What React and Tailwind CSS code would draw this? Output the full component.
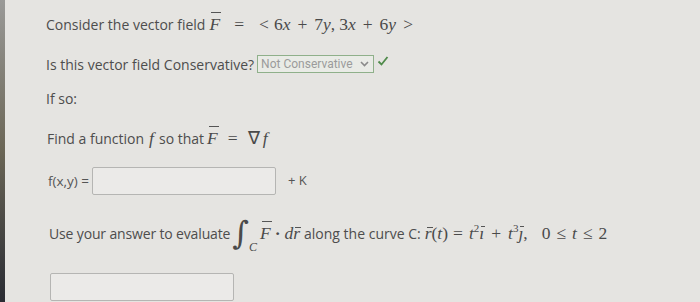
import React from "react";

const M = ({ children, className = "" }) => (
  <span className={"font-['Liberation_Serif',serif] italic text-[#4a4a4a] " + className}>{children}</span>
);

const Up = ({ children, className = "" }) => (
  <span className={"font-['Liberation_Serif',serif] not-italic text-[#4a4a4a] " + className}>{children}</span>
);

// letter with a bar over it (vector notation)
const Bar = ({ children, top = "top-[2px]", className = "" }) => (
  <span className={"relative inline-block font-['Liberation_Serif',serif] italic text-[#4a4a4a] " + className}>
    <span className={"absolute left-[2px] right-[-1px] h-[1px] bg-[#555] " + top}></span>
    {children}
  </span>
);

export default function App() {
  return (
    <div className="w-[700px] h-[302px] overflow-hidden flex bg-[#e5e4e1] font-['Open_Sans',sans-serif] text-[#4d4d4d]">
      {/* dark strip at the left edge of the photo */}
      <div className="w-[5px] h-full bg-gradient-to-b from-[#9a9a98] via-[#6b6656] to-[#2a2c33]"></div>

      <div className="flex-1 flex flex-col pl-[41px] pt-[12px] text-[14px]">
        <div className="flex items-center h-[22px] mt-[1px]">
          <span>Consider the vector field</span>
          <span className="ml-[4px] text-[17.5px] flex items-center">
            <Bar top="top-[1px]">F</Bar>
            <Up className="ml-[14px]">=</Up>
            <Up className="ml-[15px]">&lt;</Up>
            <Up className="ml-[5px]">6</Up><M>x</M>
            <Up className="ml-[7px]">+</Up>
            <Up className="ml-[7px]">7</Up><M>y</M><Up>,</Up>
            <Up className="ml-[4px]">3</Up><M>x</M>
            <Up className="ml-[7px]">+</Up>
            <Up className="ml-[7px]">6</Up><M>y</M>
            <Up className="ml-[7px]">&gt;</Up>
          </span>
        </div>

        <div className="flex items-center h-[22px] mt-[18px]">
          <span>Is this vector field Conservative?</span>
          <div className="ml-[3px] w-[117px] h-[18px] border border-[#8fb08a] bg-[#e9ebe6] flex items-center pl-[3px] pr-[4px] font-['Roboto',sans-serif] text-[12px] text-[#9b9b9b]">
            <span className="flex-1">Not Conservative</span>
            <svg width="9" height="6" viewBox="0 0 9 6" className="ml-[2px]">
              <path d="M1 1 L4.5 4.5 L8 1" fill="none" stroke="#8a8a8a" strokeWidth="1.6" />
            </svg>
          </div>
          <svg width="12" height="12" viewBox="0 0 12 12" className="ml-[3px] -mt-[6px]">
            <path d="M1.5 6.5 L4.5 9.5 L10.5 2" fill="none" stroke="#4f8a4a" strokeWidth="1.8" />
          </svg>
        </div>

        <div className="flex items-center h-[22px] mt-[12px]">
          <span>If so:</span>
        </div>

        <div className="flex items-center h-[22px] mt-[18px] pl-[1px]">
          <span>Find a function</span>
          <M className="text-[17.5px] mx-[5px]">f</M>
          <span>so that</span>
          <span className="ml-[3px] text-[17.5px] flex items-center">
            <Bar top="top-[1px]">F</Bar>
            <Up className="ml-[10px]">=</Up>
            <Up className="ml-[10px]">∇</Up>
            <M className="ml-[3px]">f</M>
          </span>
        </div>

        <div className="flex items-center h-[28px] mt-[18px] pl-[2px]">
          <span className="text-[13.5px] text-[#555]">f(x,y) =</span>
          <div className="ml-[3px] w-[184px] h-[28px] border border-[#b5b5b3] rounded-[2px] bg-[#ebeae8]"></div>
          <span className="ml-[12px] text-[13px] text-[#555]">+ K</span>
        </div>

        <div className="flex items-center h-[36px] mt-[20px] pl-[3px]">
          <span className="tracking-[-0.15px]">Use your answer to evaluate</span>
          <span className="ml-[2px] h-[36px] flex items-end">
            <span className="self-center font-['DejaVu_Serif',serif] text-[32px] leading-[36px] text-[#4a4a4a]">∫</span>
            <span className="-mb-[3px] font-['Liberation_Serif',serif] italic text-[12px] leading-[14px] text-[#4a4a4a]">C</span>
          </span>
          <span className="ml-[3px] text-[17.5px] flex items-center">
            <Bar top="top-[1px]">F</Bar>
            <Up className="ml-[4px] font-bold">·</Up>
            <M className="ml-[4px]">d</M>
            <Bar top="top-[7px]" className="left-[0px]">r</Bar>
          </span>
          <span className="ml-[4px]">along the curve C:</span>
          <span className="ml-[4px] text-[17.5px] flex items-center">
            <Bar top="top-[7px]">r</Bar>
            <Up>(</Up><M>t</M><Up>)</Up>
            <Up className="ml-[5px]">=</Up>
            <M className="ml-[6px]">t</M>
            <Up className="text-[11px] -mt-[10px]">2</Up>
            <Bar top="top-[6px]">ı</Bar>
            <Up className="ml-[7px]">+</Up>
            <M className="ml-[7px]">t</M>
            <Up className="text-[11px] -mt-[10px]">3</Up>
            <Bar top="top-[6px]">ȷ</Bar>
            <Up>,</Up>
            <Up className="ml-[14px]">0</Up>
            <Up className="ml-[6px]">≤</Up>
            <M className="ml-[6px]">t</M>
            <Up className="ml-[6px]">≤</Up>
            <Up className="ml-[6px]">2</Up>
          </span>
        </div>

        <div className="mt-[22px] pl-[4px]">
          <div className="w-[184px] h-[28px] border border-[#b5b5b3] rounded-[2px] bg-[#ebeae8]"></div>
        </div>
      </div>
    </div>
  );
}
